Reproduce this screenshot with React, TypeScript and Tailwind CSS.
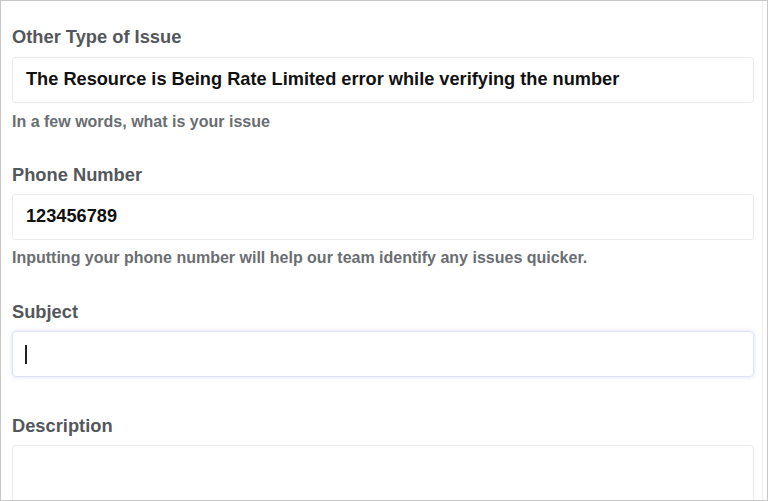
export default function App() {
  return (
    <div
      className="w-[768px] h-[501px] overflow-hidden border border-[#c9c9c9] bg-white"
      style={{ fontFamily: '"Liberation Sans", Arial, sans-serif' }}
    >
      <div className="h-full border-r border-[#ededed] mr-[4px] pl-[11px] pr-[8px] pt-[26px]">
        {/* Other type of issue */}
        <label className="block text-[18.3px] font-bold leading-[20px] text-[#53575c]">
          Other Type of Issue
        </label>
        <div className="mt-[10px] h-[46px] rounded-[3px] border border-[#ebebeb] flex items-center px-[13px] text-[18.2px] font-bold text-[#111]">
          The Resource is Being Rate Limited error while verifying the number
        </div>
        <p className="mt-[10px] text-[16px] font-bold leading-[18px] text-[#6a6e72]">
          In a few words, what is your issue
        </p>

        {/* Phone */}
        <label className="block mt-[34px] text-[18.3px] font-bold leading-[20px] text-[#53575c]">
          Phone Number
        </label>
        <div className="mt-[9px] h-[46px] rounded-[3px] border border-[#ebebeb] flex items-center px-[13px] text-[18.2px] font-bold text-[#111]">
          123456789
        </div>
        <p className="mt-[9px] text-[16px] font-bold leading-[18px] text-[#6a6e72]">
          Inputting your phone number will help our team identify any issues quicker.
        </p>

        {/* Subject */}
        <label className="block mt-[35px] text-[18.3px] font-bold leading-[20px] text-[#53575c]">
          Subject
        </label>
        <div className="mt-[9px] h-[46px] rounded-[4px] border border-[#dde3f5] shadow-[0_0_4px_rgba(150,170,230,0.35)] flex items-center px-[12px]">
          <span className="block w-[2px] h-[19px] bg-[#222]" />
        </div>

        {/* Description */}
        <label className="block mt-[39px] text-[18.3px] font-bold leading-[20px] text-[#53575c]">
          Description
        </label>
        <div className="mt-[9px] h-[80px] rounded-[3px] border border-[#ebebeb]" />
      </div>
    </div>
  )
}
